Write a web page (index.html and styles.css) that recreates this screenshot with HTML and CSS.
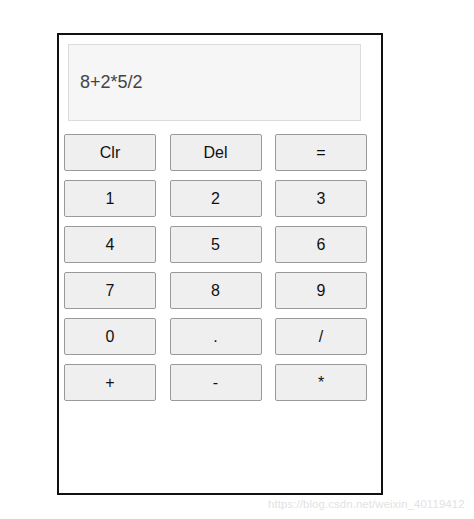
FILE: index.html
```html
<!DOCTYPE html>
<html>
<head>
<meta charset="utf-8">
<link rel="stylesheet" href="styles.css">
</head>
<body>
<div class="calc">
  <div class="display">8+2*5/2</div>
  <div class="keys">
    <button class="key">Clr</button>
    <button class="key">Del</button>
    <button class="key">=</button>
    <button class="key">1</button>
    <button class="key">2</button>
    <button class="key">3</button>
    <button class="key">4</button>
    <button class="key">5</button>
    <button class="key">6</button>
    <button class="key">7</button>
    <button class="key">8</button>
    <button class="key">9</button>
    <button class="key">0</button>
    <button class="key">.</button>
    <button class="key">/</button>
    <button class="key">+</button>
    <button class="key">-</button>
    <button class="key">*</button>
  </div>
</div>
<div class="watermark">https://blog.csdn.net/weixin_40119412</div>
</body>
</html>
```
FILE: styles.css
```css
html, body {
  margin: 0;
  padding: 0;
  background: #fff;
  font-family: "Liberation Sans", Arial, sans-serif;
}
body {
  width: 474px;
  height: 519px;
  overflow: hidden;
}
.calc {
  box-sizing: border-box;
  margin: 33px 0 0 57px;
  width: 326px;
  height: 462px;
  border: 2px solid #111;
  padding: 9px 0 0 0;
}
.display {
  box-sizing: border-box;
  margin-left: 9px;
  width: 293px;
  height: 77px;
  background: #f6f6f6;
  border: 1px solid #dcdcdc;
  color: #444;
  font-size: 18px;
  line-height: 75px;
  padding-left: 11px;
}
.keys {
  display: grid;
  grid-template-columns: repeat(3, 92px);
  grid-auto-rows: 37px;
  column-gap: 13.5px;
  row-gap: 9px;
  margin: 13px 0 0 5px;
}
.key {
  box-sizing: border-box;
  margin: 0;
  padding: 0;
  background: #efefef;
  border: 1px solid #9a9a9a;
  border-radius: 2px;
  color: #111;
  font-family: "Liberation Sans", Arial, sans-serif;
  font-size: 16px;
}
.watermark {
  margin: 3px 0 0 268px;
  font-size: 11.4px;
  color: #e2e2e2;
  letter-spacing: 0.1px;
}
```
